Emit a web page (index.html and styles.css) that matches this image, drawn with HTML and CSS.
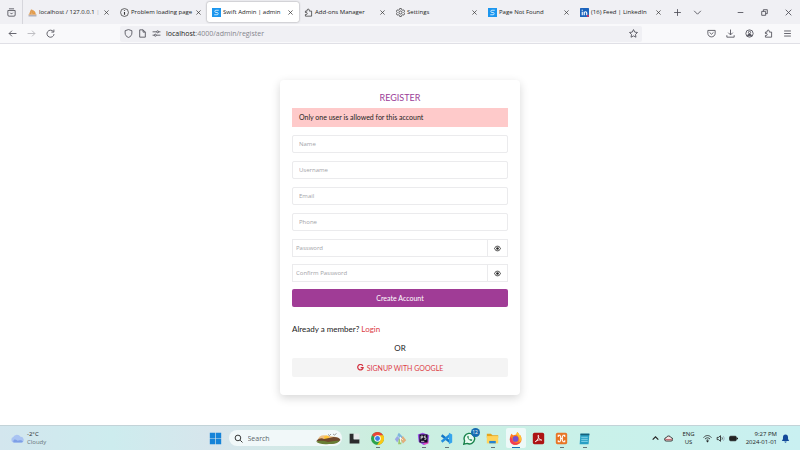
FILE: index.html
```
<!DOCTYPE html>
<html lang="en">
<head>
  <meta charset="UTF-8">
  <meta name="viewport" content="width=device-width, initial-scale=1.0">
  <title>Swift Admin | admin</title>
  <link rel="stylesheet" href="styles.css">
</head>
<body>

  <!-- shared icons -->
  <svg class="defs" aria-hidden="true">
    <symbol id="x" viewBox="0 0 10 10"><path d="M2 2l6 6M8 2l-6 6"/></symbol>
    <symbol id="swift" viewBox="0 0 16 16"><rect width="16" height="16" fill="#1c96ee" stroke="none"/><path d="M12 4H7a2 2 0 0 0 0 4h2a2 2 0 0 1 0 4H4" fill="none" stroke="#d5efff" stroke-width="1.600"/></symbol>
    <symbol id="puzzle" viewBox="0 0 16 16"><path d="M2.500 5.500h3V4a2 2 0 0 1 4 0v1.500h4v9h-11v-3H4a1.700 1.700 0 0 0 0-3.500H2.500z"/></symbol>
    <symbol id="eye" viewBox="0 0 16 16"><path d="M1 8c3-7 11-7 14 0-3 7-11 7-14 0z" fill="#fff" stroke="#222" stroke-width="2"/><circle cx="8" cy="8" r="3" fill="#222" stroke="none"/></symbol>
  </svg>

  <header class="browser">
    <div class="tab-bar">
      <button class="view-btn" aria-label="Firefox View"><svg class="icon" viewBox="0 0 16 16"><path d="M3.500 1.500h9M1.500 4.500h13v8a2 2 0 0 1-2 2h-9a2 2 0 0 1-2-2zM5.500 8.500c1 2 4 2 5 0"/></svg></button>
      <div class="tabs">
        <div class="tab">
          <svg class="favicon" viewBox="0 0 16 16"><path d="M1 12h14M3 10l3-7v7zM8 10V4q5 2 5 6z" fill="#eda34b" stroke="#d98b35"/><path d="M1 14h14" stroke="#777e9a"/></svg>
          <span class="tab-title">localhost / 127.0.0.1 <span class="faded">|</span></span>
          <button class="tab-close" aria-label="Close tab"><svg><use href="#x"/></svg></button>
        </div>
        <div class="tab">
          <svg class="favicon" viewBox="0 0 16 16"><circle cx="8" cy="8" r="7"/><path d="M8 7v5M8 4v1.500" stroke-width="2"/></svg>
          <span class="tab-title">Problem loading page</span>
          <button class="tab-close" aria-label="Close tab"><svg><use href="#x"/></svg></button>
        </div>
        <div class="tab active">
          <svg class="favicon"><use href="#swift"/></svg>
          <span class="tab-title">Swift Admin | admin</span>
          <button class="tab-close" aria-label="Close tab"><svg><use href="#x"/></svg></button>
        </div>
        <div class="tab">
          <svg class="favicon"><use href="#puzzle"/></svg>
          <span class="tab-title">Add-ons Manager</span>
          <button class="tab-close" aria-label="Close tab"><svg><use href="#x"/></svg></button>
        </div>
        <div class="tab">
          <svg class="favicon" viewBox="0 0 16 16"><path d="M6.500 1h3l.6 2 1.700.9 2.100-.5 1.500 2.500L14 7.500v1l1.400 1.600-1.500 2.500-2.100-.5-1.700.9-.6 2h-3l-.6-2-1.700-.9-2.100.5L.6 10.100 2 8.500v-1L.6 5.900l1.500-2.500 2.100.5L5.900 3z"/><circle cx="8" cy="8" r="2.700"/></svg>
          <span class="tab-title">Settings</span>
          <button class="tab-close" aria-label="Close tab"><svg><use href="#x"/></svg></button>
        </div>
        <div class="tab">
          <svg class="favicon"><use href="#swift"/></svg>
          <span class="tab-title">Page Not Found</span>
          <button class="tab-close" aria-label="Close tab"><svg><use href="#x"/></svg></button>
        </div>
        <div class="tab">
          <svg class="favicon" viewBox="0 0 16 16"><rect width="16" height="16" rx="1" fill="#1b63bd" stroke="none"/><path d="M4 6.500V13M4 3v1.800M7.500 13V6.500M7.500 9c0-3 4.500-3 4.500 0v4" stroke="#fff" stroke-width="2"/><circle cx="14" cy="14" r="2" fill="#d1355e" stroke="none"/></svg>
          <span class="tab-title">(16) Feed | LinkedIn</span>
          <button class="tab-close" aria-label="Close tab"><svg><use href="#x"/></svg></button>
        </div>
      </div>
      <div class="tab-tools">
        <button aria-label="New tab"><svg class="icon" viewBox="0 0 16 16"><path d="M8 2v12M2 8h12"/></svg></button>
        <button aria-label="List all tabs"><svg class="icon" viewBox="0 0 16 16"><path d="M2 5l6 6 6-6"/></svg></button>
      </div>
      <div class="window-tools">
        <button aria-label="Minimize"><svg class="icon" viewBox="0 0 16 16"><path d="M3 8h10"/></svg></button>
        <button aria-label="Restore"><svg class="icon" viewBox="0 0 16 16"><path d="M3 6h7v7H3zM6 6V3h7v7h-3"/></svg></button>
        <button aria-label="Close"><svg class="icon" viewBox="0 0 16 16"><path d="M3 3l10 10M13 3L3 13"/></svg></button>
      </div>
    </div>

    <div class="nav-bar">
      <div class="nav-tools">
        <button aria-label="Back"><svg class="icon" viewBox="0 0 16 16"><path d="M15 8H2M7 3L2 8l5 5"/></svg></button>
        <button aria-label="Forward" disabled><svg class="icon" viewBox="0 0 16 16"><path d="M1 8h13M9 3l5 5-5 5"/></svg></button>
        <button aria-label="Reload"><svg class="icon" viewBox="0 0 16 16"><path d="M13 4.500A6.300 6.300 0 1 0 14.300 9M14 1v4.500H9.500"/></svg></button>
      </div>
      <div class="url-bar">
        <svg class="icon" viewBox="0 0 16 16"><path d="M8 1l6 2v4c0 4-2 6.500-6 8-4-1.500-6-4-6-8V3z"/></svg>
        <svg class="icon" viewBox="0 0 16 16"><path d="M3 1.500h6l4 4v9H3zM9 1.500v4h4"/></svg>
        <svg class="icon" viewBox="0 0 16 16"><path d="M1 5h7M12 5h3M1 11h3M8 11h7"/><circle cx="10" cy="5" r="1.800"/><circle cx="6" cy="11" r="1.800"/></svg>
        <p class="url"><span class="host">localhost</span>:4000/admin/register</p>
        <button aria-label="Bookmark this page"><svg class="icon" viewBox="0 0 16 16"><path d="M8 1l2.200 4.500 4.900.7-3.600 3.500.9 4.900L8 12.300l-4.400 2.300.9-4.900L.9 6.200l4.900-.7z"/></svg></button>
      </div>
      <div class="nav-tools right">
        <button aria-label="Save to Pocket"><svg class="icon" viewBox="0 0 16 16"><path d="M1.500 2.500h13v5c0 4-3 6.500-6.500 6.500s-6.500-2.500-6.500-6.500zM4.500 6L8 9.300 11.500 6"/></svg></button>
        <button aria-label="Downloads"><svg class="icon" viewBox="0 0 16 16"><path d="M8 1v9M4 6.500L8 10.500l4-4M1.500 11v3.500h13V11"/></svg></button>
        <button aria-label="Account"><svg class="icon" viewBox="0 0 16 16"><circle cx="8" cy="8" r="6.500"/><circle cx="8" cy="6" r="2"/><path d="M4.500 12c0-4 7-4 7 0z" fill="#5b5b66"/></svg></button>
        <button aria-label="Extensions"><svg class="icon"><use href="#puzzle"/></svg></button>
        <button aria-label="Menu"><svg class="icon" viewBox="0 0 16 16"><path d="M2 3.500h12M2 8h12M2 12.500h12"/></svg></button>
      </div>
    </div>
  </header>

  <main class="page">
    <form class="card">
      <h1>REGISTER</h1>
      <p class="alert" role="alert">Only one user is allowed for this account</p>
      <input class="field" type="text" placeholder="Name" aria-label="Name">
      <input class="field" type="text" placeholder="Username" aria-label="Username">
      <input class="field" type="email" placeholder="Email" aria-label="Email">
      <input class="field" type="tel" placeholder="Phone" aria-label="Phone">
      <div class="password">
        <input type="password" placeholder="Password" aria-label="Password">
        <button type="button" aria-label="Show password"><svg><use href="#eye"/></svg></button>
      </div>
      <div class="password">
        <input type="password" placeholder="Confirm Password" aria-label="Confirm Password">
        <button type="button" aria-label="Show password"><svg><use href="#eye"/></svg></button>
      </div>
      <button class="submit" type="submit">Create Account</button>
      <p class="member">Already a member? <a href="#login">Login</a></p>
      <p class="or">OR</p>
      <a class="google" href="#google">
        <svg viewBox="0 0 16 16"><path d="M13.300 4.300A6.200 6.200 0 1 0 14 8.200H8.500" fill="none" stroke="#d3303f" stroke-width="2.800"/></svg>
        SIGNUP WITH GOOGLE
      </a>
    </form>
  </main>

  <footer class="taskbar">
    <div class="weather">
      <svg viewBox="0 0 24 18"><path d="M6 16a5 5 0 0 1-.5-9.500A7 7 0 0 1 18 6a5 5 0 0 1 1 10z" fill="#a9c3f2"/><path d="M6 16a4 4 0 0 1 1-5c3-1 5 1 6 2 3-2 8-1 9 1 0 1-2 2-3 2z" fill="#7d9fe6"/></svg>
      <div>
        <p>-2°C</p>
        <p class="muted">Cloudy</p>
      </div>
    </div>

    <div class="apps">
      <button class="app start" aria-label="Start"><svg viewBox="0 0 16 16"><path d="M1 1h6.600v6.600H1zM8.400 1H15v6.600H8.400zM1 8.400h6.600V15H1zM8.400 8.400H15V15H8.400z" fill="#1583d8"/></svg></button>
      <label class="search">
        <svg class="lens" viewBox="0 0 16 16"><circle cx="7" cy="7" r="5"/><path d="M11 11l4 4"/></svg>
        <input type="search" placeholder="Search" aria-label="Search">
        <svg class="scene" viewBox="0 0 52 26"><path d="M5 17Q8 5 22 7l20 3q8 2 6 8z" fill="#efc185"/><circle cx="23" cy="12" r="5" fill="#ffc438"/><path d="M3 17q8-7 15-3l10-2 9-2q12 0 14 6-6 7-20 8Q10 24 3 17z" fill="#70482d"/><path d="M2 19q12-3 24 1l12-2 12-1q-6 8-22 7-18 2-26-5z" fill="#697e35"/><path d="M26 5l3 2 3-3M36 4l3 2 4-3" fill="none" stroke="#443c39"/></svg>
      </label>
      <button class="app" aria-label="Task view"><svg viewBox="0 0 16 16"><path d="M2 2h5v7h7v5H2z" fill="#2b2b2d"/><path d="M7 2h7v7H7z" fill="#e6e9e9"/></svg></button>
      <button class="app running" aria-label="Chrome"><svg viewBox="0 0 16 16"><circle cx="8" cy="8" r="8" fill="#2ca34c"/><path d="M8 8L1.100 4A8 8 0 0 1 15 4z" fill="#e84436"/><path d="M8 4h7a8 8 0 0 1-7.500 12l4-6z" fill="#fbc813"/><circle cx="8" cy="8" r="4" fill="#fff"/><circle cx="8" cy="8" r="3" fill="#3c7ee8"/></svg></button>
      <button class="app" aria-label="Git client"><svg viewBox="0 0 16 16"><path d="M6 1l5 5-2 3-5-5z" fill="#7eb7dd"/><path d="M4 5l3 3-3 5-3-4z" fill="#9ba9e5"/><path d="M11 5l4 5-4 4-3-5z" fill="#e1ae7b"/><path d="M6 8l3 2v5H5z" fill="#9bc76b"/><path d="M8 6v7M8 7l3 3" fill="none" stroke="#fff"/></svg></button>
      <button class="app running" aria-label="PhpStorm"><svg viewBox="0 0 16 16"><path d="M1 3l6-2 8 3-1 9-6 3-6-4z" fill="#9b4de8"/><path d="M8 14l6-4v4l-5 2z" fill="#e04ac1"/><path d="M3 3h10v10H3z" fill="#130b22"/><path d="M5 9V5h2v2H5M11 5H9v2h2v2H9M5 11.500h4" fill="none" stroke="#fff" stroke-width=".9"/></svg></button>
      <button class="app running" aria-label="VS Code"><svg viewBox="0 0 16 16"><path d="M2 4l10 8" stroke="#1477c5" stroke-width="3"/><path d="M2 12L12 4" stroke="#248fdf" stroke-width="3"/><path d="M11 1l4 2v10l-4 2z" fill="#35a5ed"/></svg></button>
      <button class="app" aria-label="WhatsApp"><svg viewBox="0 0 16 16"><path d="M1 15l1-4a6.500 6.500 0 1 1 3 3z" fill="#e9fbf2" stroke="#17824b" stroke-width="1.700"/><path d="M5.500 5c-1 2 2 6 5 6l1-1.500-2-1-1 1-2-2 .8-1-.8-2z" fill="#17824b"/></svg><span class="badge">12</span></button>
      <button class="app running" aria-label="File Explorer"><svg viewBox="0 0 16 16"><path d="M1 2h5l2 2h7v3H1z" fill="#e5a51d"/><path d="M1 5h14v9H1z" fill="#ffd35a"/><path d="M4 11h8v3H4z" fill="#2583cf"/></svg></button>
      <button class="app current" aria-label="Firefox"><svg viewBox="0 0 16 16"><path d="M2 4l1-2 2 2 4-1 1-3c2 2 3 3 3 5l1-1c4 7-1 12-6 12S-1 11 2 4z" fill="#ff7b22"/><path d="M9 3l1-3c2 2 3 3 3 5l1-1c2 4 1 7-1 9 0-5-1-8-4-10z" fill="#ffc42e"/><path d="M1 9c0 9 11 8 13 3-5 3-10 1-10-3L2 6z" fill="#f23b57"/><circle cx="8" cy="8.500" r="3.500" fill="#7450cf"/></svg></button>
      <button class="app" aria-label="Acrobat"><svg viewBox="0 0 16 16"><rect x="1" y="1" width="14" height="14" rx="2" fill="#ad1414"/><path d="M4 12c3-1 5-7 4-8s-1 5 4 6c-2-1-6 0-8 2z" fill="none" stroke="#fff"/></svg></button>
      <button class="app running" aria-label="XAMPP"><svg viewBox="0 0 16 16"><rect x="1" y="1" width="14" height="14" rx="2" fill="#e77525"/><path d="M4 6V4h2l1 2v4l-1 2H4v-2M12 6V4h-2L9 6v4l1 2h2v-2M7 8h2" fill="none" stroke="#fff" stroke-width="1.300"/></svg></button>
      <button class="app running" aria-label="Notepad"><svg viewBox="0 0 16 16"><path d="M3 2h11l-1 13H2z" fill="#279fc4"/><path d="M3 2h11v2H3z" fill="#17617b"/><path d="M4 6.500h8M4 9h8M4 11.500h8" stroke="#9be2f1"/></svg></button>
    </div>

    <div class="tray">
      <svg class="icon" viewBox="0 0 16 16"><path d="M3 10l5-5 5 5" stroke-width="2"/></svg>
      <svg class="icon cloud" viewBox="0 0 16 16"><path d="M4 12.500a3 3 0 0 1 0-6 4.500 4.500 0 0 1 8.500 0 3 3 0 0 1 0 6z" fill="#f5dede"/><path d="M2 10h12" stroke="#b24b56"/></svg>
      <p class="lang">ENG<br>US</p>
      <svg class="icon" viewBox="0 0 16 16"><path d="M1 6.500c4-5 10-5 14 0M3.500 9c3-3 6-3 9 0M6 11.500c1-1.500 3-1.500 4 0" stroke-width="1.500"/><circle cx="8" cy="13" r="1" fill="#222"/></svg>
      <svg class="icon" viewBox="0 0 16 16"><path d="M2 6h2.500L8 3v10l-3.500-3H2z"/><path d="M10.500 6c1 1 1 3 0 4" /><path d="M13 4c2 3 2 5 0 8" stroke="#9ab"/></svg>
      <svg class="icon battery" viewBox="0 0 16 16"><rect x="1" y="4" width="12" height="8" rx="2" fill="#222"/><path d="M15 6.500v3" stroke-width="2"/></svg>
      <p class="clock">9:27 PM<br>2024-01-01</p>
      <svg class="bell" viewBox="0 0 16 16"><path d="M8 1c3 0 4.500 2 4.500 5v3l2 3.500h-13l2-3.500V6c0-3 1.500-5 4.500-5zM6 13.500h4a2 2 0 0 1-4 0z" fill="#12499a"/></svg>
    </div>
  </footer>

</body>
</html>
```
FILE: styles.css
```
* {
  box-sizing: border-box;
}

body {
  margin: 0;
  min-height: 100vh;
  display: flex;
  flex-direction: column;
  background: #fff;
  color: #222;
  font-family: "Open Sans", "Noto Sans", sans-serif;
  font-size: 6px;
}

p, h1 {
  margin: 0;
}

button {
  padding: 0;
  border: none;
  background: none;
  color: inherit;
  font: inherit;
  cursor: pointer;
  display: flex;
  align-items: center;
  justify-content: center;
}

a {
  text-decoration: none;
}

svg {
  flex: none;
}

.defs {
  display: none;
}

.icon {
  width: 9px;
  height: 9px;
  fill: none;
  stroke: #4c4c55;
  stroke-width: 1.5;
}

/* browser */
.browser {
  border-bottom: 1px solid #e0e0e6;
}

.tab-bar {
  display: flex;
  height: 24px;
  background: #f0f0f4;
}

.view-btn {
  width: 23px;
  border-right: 1px solid #d6d6dc;
}

.tabs {
  display: flex;
  flex: 0 1 644px;
  min-width: 0;
}

.tab {
  flex: 1;
  min-width: 0;
  display: flex;
  align-items: center;
  margin: 2px 0;
  padding: 0 5px;
}

.tab.active {
  background: #fff;
  border-radius: 2px;
  box-shadow: 0 0 2px rgba(0,0,0,0.45);
}

.favicon {
  width: 9px;
  height: 9px;
  margin-right: 2px;
  fill: none;
  stroke: #333;
  stroke-width: 1.3;
}

.tab-title {
  flex: 1;
  min-width: 0;
  white-space: nowrap;
}

.faded {
  color: #b5b5bb;
}

.tab-close svg {
  width: 7px;
  height: 7px;
  fill: none;
  stroke: #333;
  stroke-width: 1;
}

.tab-tools,
.window-tools {
  display: flex;
}

.tab-tools button {
  width: 20px;
}

.window-tools {
  margin-left: auto;
}

.window-tools button {
  width: 24px;
}

.nav-bar {
  display: flex;
  align-items: center;
  height: 19px;
  background: #f9f9fb;
}

.nav-tools {
  flex: 0 1 120px;
  display: flex;
  gap: 10px;
  padding-left: 8px;
}

.nav-tools button:disabled {
  opacity: 0.4;
}

.nav-tools.right {
  flex-basis: 158px;
  justify-content: flex-end;
  padding: 0 8px 0 0;
}

.url-bar {
  flex: 1;
  display: flex;
  align-items: center;
  gap: 5px;
  height: 16px;
  padding: 0 4px;
  border-radius: 2px;
  background: #f0f0f4;
}

.url {
  flex: 1;
  font-size: 7px;
  color: #85858c;
}

.host {
  color: #222;
}

/* register form */
.page {
  flex: 1;
  padding: 36px 0 30px;
  font-family: Lato, sans-serif;
  font-size: 7px;
}

.card {
  width: 240px;
  margin: 0 auto;
  padding: 12px 12px 18px;
  border-radius: 4px;
  background: #fff;
  box-shadow: 0 3px 10px rgba(0,0,0,0.16);
}

.card h1 {
  margin-bottom: 4px;
  font-size: 9px;
  font-weight: 400;
  line-height: 12px;
  text-align: center;
  color: #9c3d98;
}

.alert {
  margin-bottom: 8px;
  padding: 0 7px;
  line-height: 19px;
  background: #fecaca;
}

.card input {
  border: 1px solid #ebebed;
  background: #fff;
  color: #222;
  font-family: "Open Sans", "Noto Sans", sans-serif;
  font-size: 6px;
  outline: none;
}

.card input::placeholder {
  color: #a3a3a8;
}

.field {
  display: block;
  width: 100%;
  height: 18px;
  margin-bottom: 8px;
  padding: 0 6px;
  border-radius: 2px;
}

.password {
  display: flex;
  height: 18px;
  margin-bottom: 7px;
}

.password input {
  flex: 1;
  min-width: 0;
  padding: 0 3px;
}

.password button {
  width: 20px;
  border: 1px solid #ebebed;
  border-left: none;
}

.password svg {
  width: 7px;
  height: 7px;
}

.submit {
  width: 100%;
  height: 18px;
  margin-bottom: 16px;
  border-radius: 2px;
  background: #a03c96;
  color: #fff;
}

.member {
  margin-bottom: 7px;
  font-size: 8px;
  line-height: 12px;
}

.member a,
.google {
  color: #dc3c46;
}

.or {
  margin-bottom: 4px;
  font-size: 8px;
  line-height: 12px;
  text-align: center;
}

.google {
  display: flex;
  align-items: center;
  justify-content: center;
  gap: 3px;
  height: 19px;
  border-radius: 2px;
  background: #f4f4f4;
}

.google svg {
  width: 7px;
  height: 7px;
}

/* taskbar */
.taskbar {
  display: grid;
  grid-template-columns: 1fr auto 1fr;
  align-items: center;
  height: 25px;
  border-top: 1px solid #c3d3d8;
  background: linear-gradient(to right, #d3e6ee, #cdecee 14%, #d7e5ec 27%, #cceedf 47%, #c9f1e8 70%, #c9f0f1);
}

.weather {
  display: flex;
  align-items: center;
  gap: 3px;
  padding-left: 10px;
  line-height: 8px;
}

.weather svg {
  width: 14px;
  height: 11px;
}

.muted {
  color: #66747a;
}

.apps {
  display: flex;
  align-items: center;
  gap: 3px;
}

.app {
  position: relative;
  width: 20px;
  height: 20px;
  border-radius: 2px;
}

.app svg {
  width: 13px;
  height: 13px;
}

.app.start {
  width: 20px;
}

.app.running::after,
.app.current::after {
  content: "";
  position: absolute;
  bottom: 0;
  left: 50%;
  width: 4px;
  height: 1px;
  background: #68767a;
  transform: translateX(-50%);
}

.app.current {
  background: #edf9f8;
}

.app.current::after {
  width: 8px;
  background: #1870b8;
}

.badge {
  position: absolute;
  top: 0;
  right: 0;
  width: 9px;
  border-radius: 50%;
  background: #176bb1;
  color: #fff;
  font-size: 5px;
  line-height: 9px;
}

.search {
  display: flex;
  align-items: center;
  gap: 5px;
  width: 113px;
  height: 16px;
  padding: 0 1px 0 5px;
  border-radius: 8px;
  background: #f1f8f9;
}

.search input {
  flex: 1;
  min-width: 0;
  padding: 0;
  border: none;
  outline: none;
  background: none;
  font: inherit;
  font-size: 7px;
}

.search input::placeholder {
  color: #5d666a;
}

.lens {
  width: 9px;
  height: 9px;
  fill: none;
  stroke: #222;
  stroke-width: 1.6;
}

.scene {
  width: 26px;
  height: 15px;
}

.tray {
  display: flex;
  align-items: center;
  justify-content: flex-end;
  gap: 4px;
  padding-right: 10px;
  line-height: 8px;
}

.tray .icon {
  stroke: #222;
}

.lang {
  margin: 0 4px 0 5px;
  text-align: center;
}

.clock {
  margin-left: 4px;
  text-align: right;
}

.bell {
  width: 9px;
  height: 9px;
}
```
